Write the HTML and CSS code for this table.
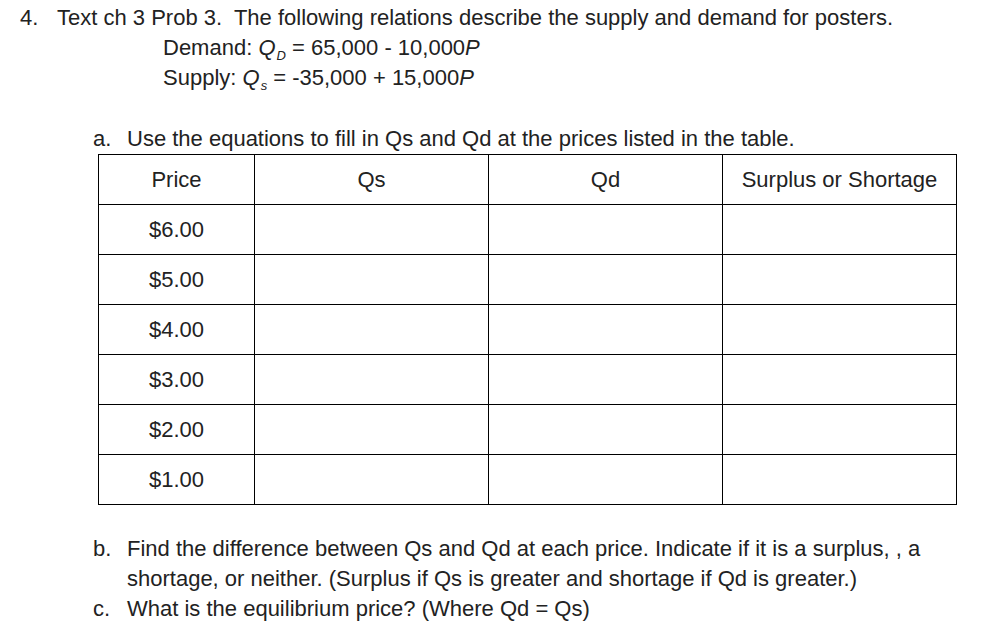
FILE: index.html
```html
<!DOCTYPE html>
<html>
<head>
<meta charset="utf-8">
<link rel="stylesheet" href="styles.css">
</head>
<body>
<div class="page">
  <div class="item top">
    <span class="num">4.</span>
    <span class="txt">Text ch 3 Prob 3.&nbsp; The following relations describe the supply and demand for posters.</span>
  </div>
  <div class="eq">Demand: <i>Q</i><sub><i>D</i></sub> = 65,000 - 10,000<i>P</i></div>
  <div class="eq">Supply: <i>Q</i><sub><i>s</i></sub> = -35,000 + 15,000<i>P</i></div>

  <div class="item sub first">
    <span class="letter">a.</span>
    <span class="txt">Use the equations to fill in Qs and Qd at the prices listed in the table.</span>
  </div>

  <table class="grid">
    <tr><td class="c1">Price</td><td class="c2">Qs</td><td class="c3">Qd</td><td class="c4">Surplus or Shortage</td></tr>
    <tr><td>$6.00</td><td></td><td></td><td></td></tr>
    <tr><td>$5.00</td><td></td><td></td><td></td></tr>
    <tr><td>$4.00</td><td></td><td></td><td></td></tr>
    <tr><td>$3.00</td><td></td><td></td><td></td></tr>
    <tr><td>$2.00</td><td></td><td></td><td></td></tr>
    <tr><td>$1.00</td><td></td><td></td><td></td></tr>
  </table>

  <div class="item sub b">
    <span class="letter">b.</span>
    <span class="txt">Find the difference between Qs and Qd at each price. Indicate if it is a surplus, , a shortage, or neither. (Surplus if Qs is greater and shortage if Qd is greater.)</span>
  </div>
  <div class="item sub">
    <span class="letter">c.</span>
    <span class="txt">What is the equilibrium price? (Where Qd = Qs)</span>
  </div>
</div>
</body>
</html>
```
FILE: styles.css
```css
html, body {
  margin: 0;
  padding: 0;
  background: #fff;
}
body {
  font-family: "Liberation Sans", Arial, sans-serif;
  font-size: 22px;
  color: #222;
  line-height: 30px;
}
.page {
  padding: 3px 0 0 20px;
  width: 960px;
}
.item {
  display: flex;
}
.num {
  width: 37px;
  flex: none;
}
.eq {
  padding-left: 143px;
}
.eq sub {
  font-size: 13px;
  vertical-align: -5px;
  line-height: 0;
  margin-left: 1px;
}
.sub {
  padding-left: 73px;
}
.letter {
  width: 34px;
  flex: none;
}
.txt {
  flex: 1;
}
.sub .txt {
  width: 810px;
  flex: none;
}
.first {
  margin-top: 31px;
}
.grid {
  margin: 0 0 0 78px;
  border-collapse: collapse;
}
.grid td {
  border: 1px solid #000;
  height: 49px;
  padding: 0;
  text-align: center;
  vertical-align: middle;
  line-height: 24px;
}
.grid .c1 { width: 155px; }
.grid .c2 { width: 233px; }
.grid .c3 { width: 233px; }
.grid .c4 { width: 233px; }
.b {
  margin-top: 29px;
}
```
